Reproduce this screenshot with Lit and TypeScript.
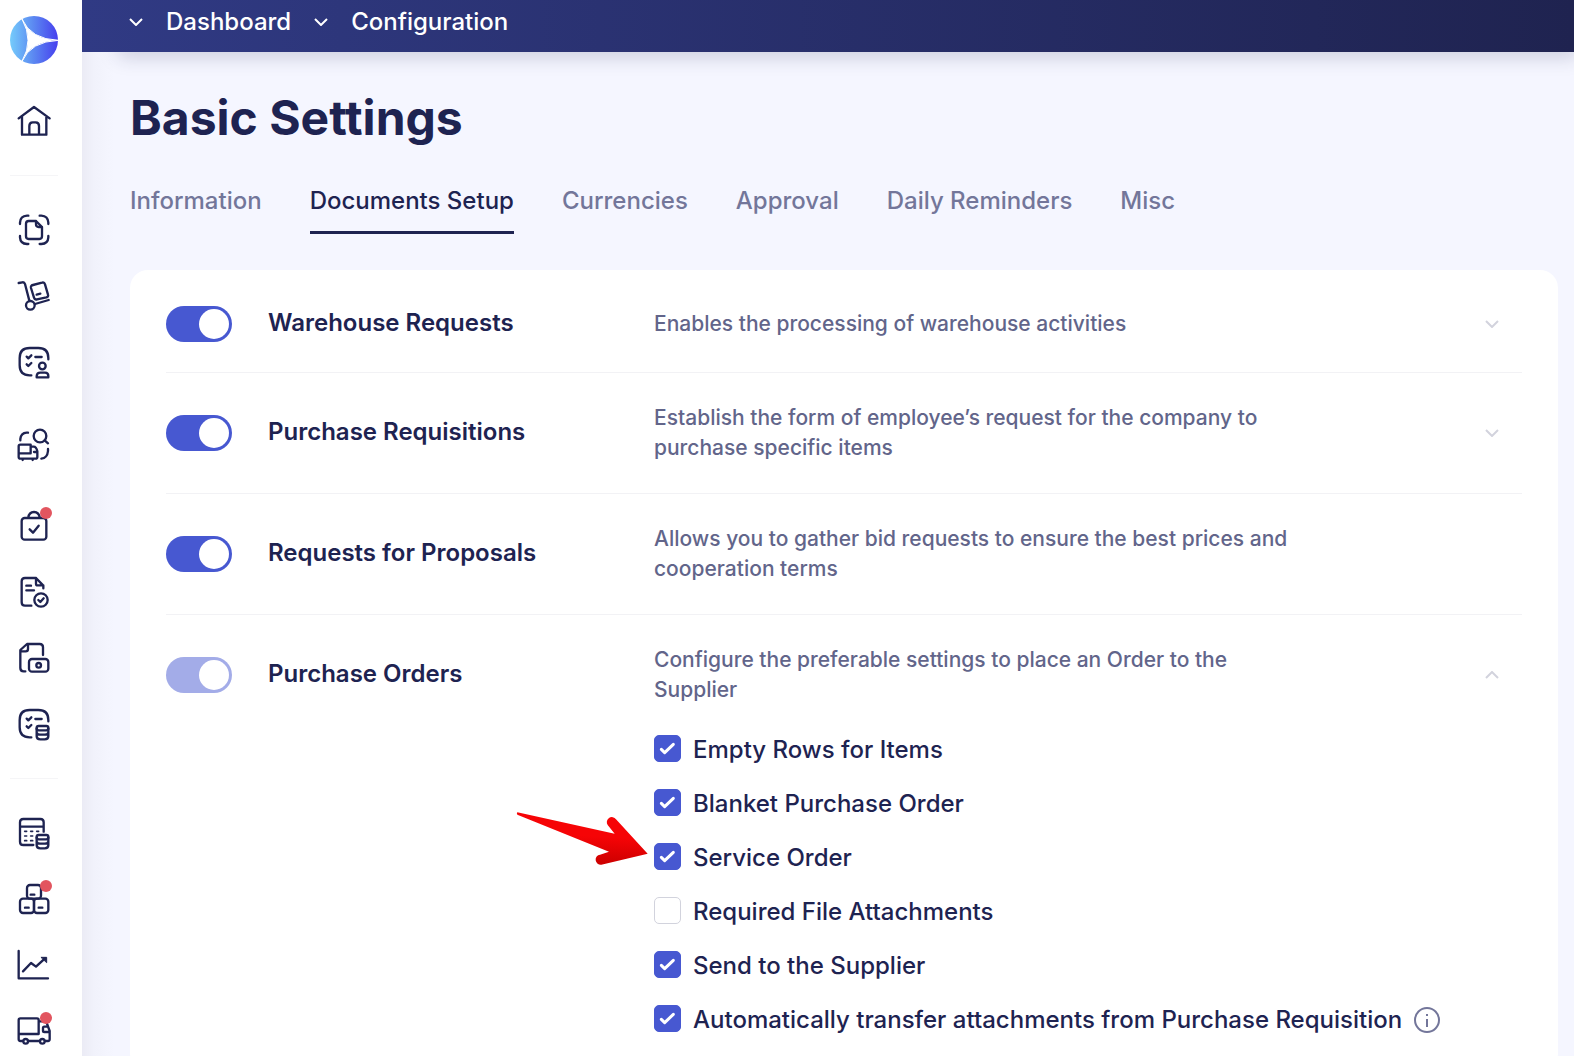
import { LitElement, html, svg, css, nothing, TemplateResult } from "lit";
import { customElement, property } from "lit/decorators.js";

const list = svg`<path d="M43 91H38Q8 91 8 61V39Q8 9 38 9H64Q94 9 94 39V43M29 35l5 5 9-9M29 58l5 5 9-9M55 36H74"/>`;
const coins = svg`<path d="M59 64V88Q59 97 70 97H83Q94 97 94 88V64M59 76Q60 83 70 83H83Q93 83 94 76"/><rect x="59" y="57" width="35" height="13" rx="6"/>`;

const icons: Record<string, TemplateResult> = {
  home: svg`<path d="M5 43L51 9L98 43M15 37V92H88V37M37 92V66Q37 55 47 55H56Q66 55 66 66V92"/>`,
  scan: svg`<path d="M9 33V29Q10 9 30 8H34M68 8H73Q93 9 94 29V33M94 69V73Q93 92 73 93H68M34 93H30Q10 92 9 73V69"/>
    <path d="M57 24H35q-8 0-8 8V70q0 8 8 8H67q8 0 8-8V42L57 24V34q0 8 8 8H75"/>`,
  dolly: svg`<path d="M5 12L16 10Q22 9 24 15L37 65M54 75L95 63M48 18L75 11Q82 9 84 16L93 47Q95 53 88 55L60 61Q53 63 51 56L42 27Q40 20 48 18ZM59 47L70 44"/><circle cx="40" cy="79" r="13"/>`,
  tasksUser: svg`${list}<circle cx="76" cy="63" r="10"/><path d="M59 97V93Q60 83 70 83H84Q94 83 94 93V97Z"/>`,
  supplierSearch: svg`<path d="M10 40V36Q12 18 29 17H33M93 66V72Q91 93 73 95M83 40L93 49"/><circle cx="69" cy="27" r="19"/>
    <path d="M41 79V53H10Q5 53 5 58V90Q5 95 10 95H56Q61 95 61 90V73Q58 59 50 59H41M5 79H41M61 75H51M17 99V95M47 99V95"/>`,
  bag: svg`<rect x="14" y="27" width="74" height="65" rx="9"/><path d="M34 26Q36 9 51 9Q66 9 68 26M38 61L48 71L65 50"/>`,
  docCheck: svg`<path d="M43 92H24Q14 92 14 82V19Q14 9 24 9H57L79 32V40M57 9V26Q57 31 62 31H79M28 32H42M28 46H51"/><circle cx="72" cy="75" r="20"/><path d="M64 75L70 81L80 70"/>`,
  docMoney: svg`<path d="M25 91H20Q10 91 10 81V27L30 9H68Q78 9 78 19V42M33 9V24Q33 31 26 31H10"/><rect x="36" y="54" width="58" height="38" rx="9"/><circle cx="65" cy="73" r="7"/>`,
  tasksCoins: svg`${list}${coins}`,
  calc: svg`<path d="M49 87H19Q9 87 9 77V19Q9 9 19 9H70Q80 9 80 19V47M9 32H80"/><path d="M23 46H29M41 46H47M59 46H65M23 60H29M41 60H47M23 74H29M41 74H47" stroke-width="5"/>${coins}`,
  boxes: svg`<rect x="30" y="9" width="42" height="41" rx="9"/><rect x="9" y="50" width="42" height="43" rx="9"/><rect x="51" y="50" width="43" height="43" rx="9"/><path d="M41 38H52M24 77H35M65 77H76"/>`,
  chart: svg`<path d="M5 9V91H93M18 70L42 45L57 56L84 31"/><path d="M73 28H89V43Z" fill="currentColor" stroke-width="3"/>`,
  truck: svg`<path d="M18 81H10Q5 81 5 76V18Q5 13 10 13H60Q65 13 65 18V60M5 60H65M34 81H68M84 81H93Q98 81 98 76V51L90 29Q88 22 80 22H65M98 54H82Q78 54 78 50V42Q78 38 82 38H93"/><circle cx="26" cy="82" r="7"/><circle cx="76" cy="82" r="7"/>`,
};

interface NavItem { icon: string; label: string; dot?: boolean }
const nav: NavItem[][][] = [
  [[{ icon: "home", label: "Home" }]],
  [
    [{ icon: "scan", label: "Documents" }, { icon: "dolly", label: "Warehouse" }, { icon: "tasksUser", label: "Requisitions" }],
    [{ icon: "supplierSearch", label: "Proposals" }],
    [{ icon: "bag", label: "Orders", dot: true }, { icon: "docCheck", label: "Receiving" }, { icon: "docMoney", label: "Invoices" }, { icon: "tasksCoins", label: "Payments" }],
  ],
  [[{ icon: "calc", label: "Budgets" }, { icon: "boxes", label: "Items", dot: true }, { icon: "chart", label: "Reports" }, { icon: "truck", label: "Suppliers", dot: true }]],
];

@customElement("side-nav")
class SideNav extends LitElement {
  static styles = css`
    :host { display: block; flex: none; overflow: hidden; color: #1e2351; background: #fff; }
    nav { padding: 16px 24px 0 10px; display: flex; flex-direction: column; }
    .logo { display: block; height: 48px; margin-bottom: 24px; }
    .logo svg { width: 48px; height: 48px; display: block; }
    .section { display: flex; flex-direction: column; gap: 16px; }
    .section + .section { border-top: 1px solid #f5f5f7; margin-top: 21px; padding-top: 21px; }
    .item { display: flex; align-items: center; justify-content: center; width: 48px; height: 66px; color: inherit; }
    .item svg { width: 34px; height: 34px; fill: none; stroke: currentColor; stroke-width: 7; stroke-linecap: round; stroke-linejoin: round; overflow: visible; }
    .dot { fill: #e2555f; stroke: none; }
  `;
  render() {
    return html`<nav aria-label="Main">
      <a class="logo" href="#" aria-label="Start page"><svg viewBox="0 0 144 144">
        <defs><linearGradient id="g"><stop offset="0" stop-color="#75ccfb"/><stop offset="0.5" stop-color="#5b87f1"/><stop offset="1" stop-color="#463fee"/></linearGradient></defs>
        <circle cx="72" cy="72" r="72" fill="url(#g)"/>
        <path d="M36 9Q62 70 146 73Q62 76 36 136Q72 73 36 9Z" fill="#fff" stroke="#fff" stroke-width="3"/>
      </svg></a>
      ${nav.map((s) => html`<div class="section">${s.map((g) => html`<div>${g.map((i) => html`
        <a class="item" href="#" aria-label=${i.label}><svg viewBox="0 0 102 102">${icons[i.icon]}${i.dot ? svg`<circle class="dot" cx="87" cy="12" r="18"/>` : nothing}</svg></a>`)}</div>`)}</div>`)}
    </nav>`;
  }
}

const chevron = (up = false) => html`<svg width="14" height="8" viewBox="0 0 14 8" fill="none" stroke="currentColor" stroke-width="2"><path d=${up ? "M1 7L7 1L13 7" : "M1 1L7 7L13 1"}/></svg>`;

@customElement("setting-row")
class SettingRow extends LitElement {
  @property() name = "";
  @property() text = "";
  @property() chevron = "";
  @property({ type: Boolean }) locked = false;
  static styles = css`
    :host { display: block; padding: 30px 0; border-bottom: 1px solid #f2f2f5; }
    :host(:last-child) { border-bottom: 0; }
    .row { display: grid; grid-template-columns: 66px 350px minmax(0, 1fr) 14px; column-gap: 36px; align-items: center; padding-right: 23px; }
    .toggle { appearance: none; margin: 0; width: 66px; height: 36px; border-radius: 18px; background: #4758d1; padding: 3px; display: flex; justify-content: flex-end; }
    .toggle::before { content: ""; width: 30px; height: 30px; border-radius: 50%; background: #fff; }
    .toggle:not(:checked) { justify-content: flex-start; background: #cfd0dc; }
    .toggle:disabled { background: #a3ace8; }
    .name { font-size: 24px; line-height: 30px; font-weight: 600; padding-bottom: 3px; }
    p { margin: 0; max-width: 640px; font-size: 21px; line-height: 30px; color: #62658a; }
    button { border: 0; background: none; padding: 0; color: #d2d3dd; display: flex; }
    .extra { padding-left: 488px; }
  `;
  render() {
    return html`<div class="row">
        <input class="toggle" id="t" type="checkbox" role="switch" checked ?disabled=${this.locked}>
        <label class="name" for="t">${this.name}</label>
        <p>${this.text}</p>
        ${this.chevron ? html`<button aria-label="Toggle details">${chevron(this.chevron === "up")}</button>` : nothing}
      </div>
      <div class="extra"><slot></slot></div>`;
  }
}

const options: { label: string; checked: boolean; info?: boolean; pointer?: boolean }[] = [
  { label: "Empty Rows for Items", checked: true },
  { label: "Blanket Purchase Order", checked: true },
  { label: "Service Order", checked: true, pointer: true },
  { label: "Required File Attachments", checked: false },
  { label: "Send to the Supplier", checked: true },
  { label: "Automatically transfer attachments from Purchase Requisition", checked: true, info: true },
];

@customElement("app-root")
class AppRoot extends LitElement {
  static styles = css`
    :host { display: flex; height: 100vh; overflow: hidden; font-family: Inter, "Liberation Sans", sans-serif; font-weight: 500; color: #1e2351; background: #f5f6ff; }
    .page { flex: 1; min-width: 0; display: flex; flex-direction: column; overflow: hidden; background: linear-gradient(90deg, #ebebf5, #f1f2fb 12px, #f5f6ff 32px); }
    header { height: 44px; padding: 0 47px 8px; display: flex; align-items: center; gap: 23px; flex: none; color: #fff; font-size: 24px; line-height: 30px;
      background: linear-gradient(90deg, #303a84, #1f2350); box-shadow: 20px 20px 20px -16px #1e235138; }
    header a { color: inherit; text-decoration: none; }
    main { padding: 36px 16px 0 48px; }
    h1 { margin: 0; font-size: 48px; line-height: 60px; font-weight: 700; }
    .tabs { display: flex; gap: 48px; margin: 36px 0; font-size: 24px; line-height: 34px; }
    .tabs a { color: #73769a; text-decoration: none; padding-bottom: 13px; border-bottom: 3px solid transparent; }
    .tabs a.active { color: #1e2351; border-color: #1e2351; }
    .card { background: #fff; border-radius: 18px; padding: 6px 36px; }
    ul { list-style: none; margin: 28px 0 0; padding: 0; display: flex; flex-direction: column; gap: 22px; }
    li { display: flex; align-items: center; gap: 12px; position: relative; font-size: 24px; line-height: 30px; }
    .option { display: flex; align-items: flex-start; gap: 12px; }
    .option-text { padding-top: 2px; }
    .box { position: relative; flex: none; width: 27px; height: 27px; padding-top: 2px; }
    .box input { appearance: none; display: block; margin: 0; width: 27px; height: 27px; border: 1px solid #d2d3dd; border-radius: 5px; background: #fff; }
    .box input:checked { border-color: #4758d1; background: #4758d1; }
    .box svg { position: absolute; inset: 2px 0 0; pointer-events: none; }
    .info { border: 0; background: none; padding: 2px 0 0; display: flex; color: #73769a; }
    .pointer { position: absolute; left: -138px; top: -31px; }
  `;
  render() {
    return html`<side-nav></side-nav>
      <div class="page">
        <header>${chevron()}<a href="#">Dashboard</a>${chevron()}<a href="#">Configuration</a></header>
        <main>
          <h1>Basic Settings</h1>
          <nav class="tabs" aria-label="Settings">
            ${["Information", "Documents Setup", "Currencies", "Approval", "Daily Reminders", "Misc"].map((t) => html`<a href="#" class=${t === "Documents Setup" ? "active" : ""}>${t}</a>`)}
          </nav>
          <div class="card">
            <setting-row name="Warehouse Requests" text="Enables the processing of warehouse activities" chevron="down"></setting-row>
            <setting-row name="Purchase Requisitions" text="Establish the form of employee’s request for the company to purchase specific items" chevron="down"></setting-row>
            <setting-row name="Requests for Proposals" text="Allows you to gather bid requests to ensure the best prices and cooperation terms"></setting-row>
            <setting-row name="Purchase Orders" text="Configure the preferable settings to place an Order to the Supplier" chevron="up" locked>
              <ul>${options.map((o) => html`<li>
                <label class="option"><span class="box"><input type="checkbox" .checked=${o.checked}>${o.checked ? html`<svg width="27" height="27" viewBox="0 0 81 81" fill="none" stroke="#fff" stroke-width="9" stroke-linecap="round" stroke-linejoin="round"><path d="M22 43L32 53L58 28"/></svg>` : nothing}</span><span class="option-text">${o.label}</span></label>
                ${o.info ? html`<button class="info" aria-label="More information"><svg width="26" height="26" viewBox="0 0 26 26" fill="none" stroke="currentColor" stroke-width="2"><circle cx="13" cy="13" r="12"/><path d="M13 12V20M13 7V9"/></svg></button>` : nothing}
                ${o.pointer ? html`<svg class="pointer" width="133" height="57" viewBox="0 0 399 171" aria-hidden="true">
                  <defs><linearGradient id="r" x1="0.5" y1="0.2" x2="0.4" y2="1"><stop offset="0.3" stop-color="#f60406"/><stop offset="0.9" stop-color="#cf0000"/></linearGradient></defs>
                  <path d="M4 7Q1 10 4 14L279 125L252 134A15 15 0 0 0 256 164L395 131L300 28A15 15 0 0 0 275 45L296 71Z" fill="url(#r)"/></svg>` : nothing}
              </li>`)}</ul>
            </setting-row>
          </div>
        </main>
      </div>`;
  }
}
